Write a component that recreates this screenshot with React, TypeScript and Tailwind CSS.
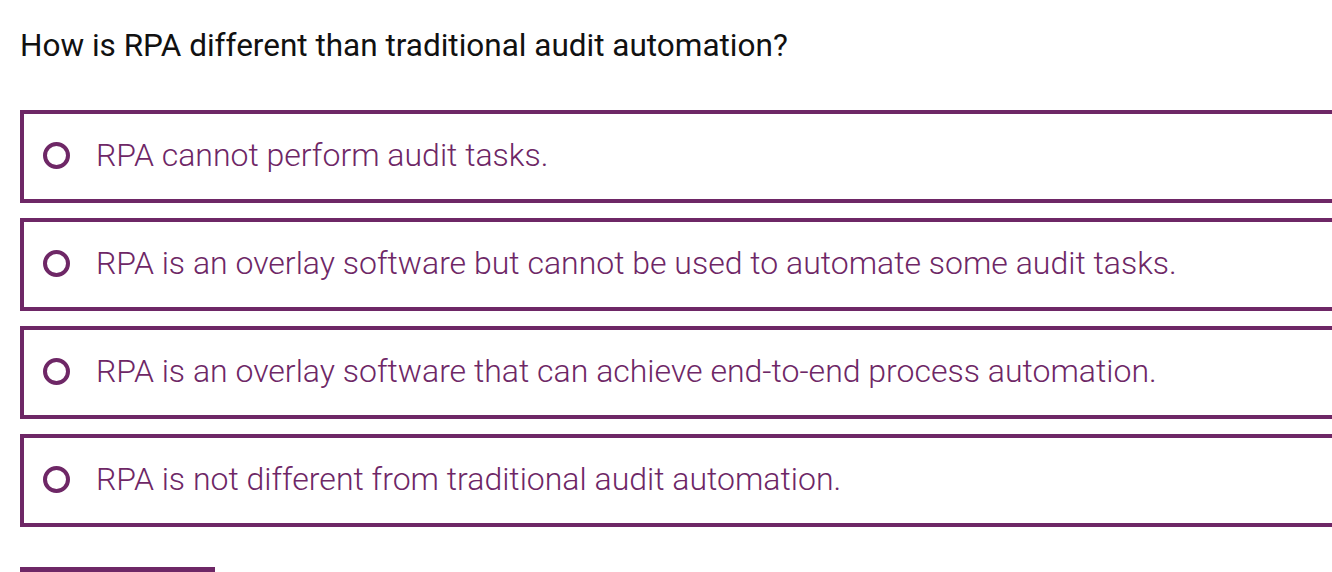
import React from 'react';

const options = [
  'RPA cannot perform audit tasks.',
  'RPA is an overlay software but cannot be used to automate some audit tasks.',
  'RPA is an overlay software that can achieve end-to-end process automation.',
  'RPA is not different from traditional audit automation.',
];

export default function App() {
  return (
    <div className="w-[1332px] h-[572px] overflow-hidden bg-white pl-5 pt-[28px] font-['Roboto',sans-serif]">
      <h1 className="text-[31.5px] leading-[36px] text-[#111] font-normal">
        How is RPA different than traditional audit automation?
      </h1>

      <div className="mt-[46px] flex flex-col gap-[15px]">
        {options.map((opt) => (
          <label
            key={opt}
            className="w-[1360px] h-[93px] border-4 border-[#6e2766] flex items-center pl-[19px] pb-[3px] cursor-pointer"
          >
            <span className="w-[27px] h-[27px] rounded-full border-4 border-[#6e2766] shrink-0" />
            <span className="ml-[26px] text-[32px] font-light text-[#6e2766]">
              {opt}
            </span>
          </label>
        ))}
      </div>

      <div className="mt-[40px] w-[195px] h-[5px] bg-[#6e2766]" />
    </div>
  );
}
